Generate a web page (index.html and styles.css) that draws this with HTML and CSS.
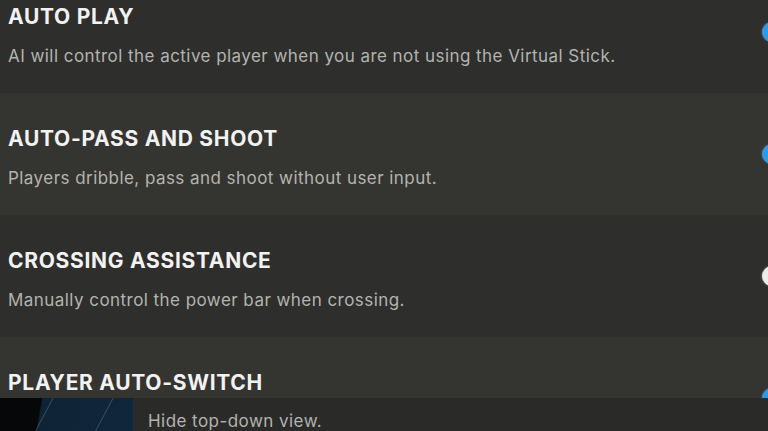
FILE: index.html
```html
<!DOCTYPE html>
<html lang="en">
<head>
    <meta charset="UTF-8">
    <meta name="viewport" content="width=device-width, initial-scale=1.0">
    <title>Assistance Settings</title>
    <link rel="stylesheet" href="styles.css">
</head>
<body>
<div class="settings">
    <div class="settings-list">

        <div class="setting-row row-dark">
            <div class="setting-text">
                <div class="setting-title">AUTO PLAY</div>
                <div class="setting-desc">AI will control the active player when you are not using the Virtual Stick.</div>
            </div>
            <div class="toggle toggle-on"></div>
        </div>

        <div class="setting-row row-light">
            <div class="setting-text">
                <div class="setting-title">AUTO-PASS AND SHOOT</div>
                <div class="setting-desc">Players dribble, pass and shoot without user input.</div>
            </div>
            <div class="toggle toggle-on"></div>
        </div>

        <div class="setting-row row-dark">
            <div class="setting-text">
                <div class="setting-title">CROSSING ASSISTANCE</div>
                <div class="setting-desc">Manually control the power bar when crossing.</div>
            </div>
            <div class="toggle toggle-off"></div>
        </div>

        <!-- last row is cut off by the preview bar, only the title shows -->
        <div class="setting-row row-light">
            <div class="setting-text">
                <div class="setting-title">PLAYER AUTO-SWITCH</div>
            </div>
            <div class="toggle toggle-on"></div>
        </div>

    </div>
</div>

<div class="preview-bar">
    <div class="preview-thumb">
        <span class="thumb-line line-one"></span>
        <span class="thumb-line line-two"></span>
    </div>
    <div class="preview-text">Hide top-down view.</div>
</div>
</body>
</html>
```

FILE: styles.css
```css
body, html {
    margin: 0;
    height: 100%;
    overflow: hidden;
    background-color: #2a2a28;
    font-family: Inter, "Open Sans", sans-serif;
}

.settings {
    height: 398px; /* list area above the preview bar */
    overflow: hidden;
}

.settings-list {
    margin-top: -29px; /* first row is scrolled partly out of view */
}

.setting-row {
    height: 122px;
    display: flex;
    align-items: flex-start;
    justify-content: space-between;
    padding: 33px 0 0 8px;
    box-sizing: border-box;
}

.row-dark {
    background-color: #2e2e2c;
}

.row-light {
    background-color: #343431;
}

.setting-text {
    display: flex;
    flex-direction: column;
    gap: 17px;
}

.setting-title {
    color: #f2f2f0;
    font-size: 21px;
    font-weight: 700;
    letter-spacing: 0.7px;
    line-height: 25px;
}

.setting-desc {
    color: #b4b4ae;
    font-size: 17px;
    line-height: 21px;
    letter-spacing: 0.45px;
}

.toggle {
    width: 20px;
    height: 20px;
    border-radius: 50%;
    margin-right: -14px;
    margin-top: 18px;
    flex-shrink: 0;
}

.toggle-on {
    background-color: #2f9be8;
    box-shadow: 0 0 3px rgba(47, 155, 232, 0.6);
}

.toggle-off {
    background-color: #ecece8;
    box-shadow: 0 0 3px rgba(255, 255, 255, 0.4);
}

.preview-bar {
    height: 33px;
    display: flex;
    overflow: hidden;
    background-color: #2a2a28;
}

.preview-thumb {
    position: relative;
    width: 133px;
    overflow: hidden;
    background: linear-gradient(100deg, #050708 0%, #050708 30%, #0f2336 31%, #10263b 100%);
}

.thumb-line {
    position: absolute;
    top: -10px;
    width: 1px;
    height: 60px;
    background-color: rgba(120, 150, 180, 0.35);
    transform: rotate(28deg);
}

.line-one {
    left: 42px;
}

.line-two {
    left: 102px;
}

.preview-text {
    color: #b4b4ae;
    font-size: 17px;
    letter-spacing: 0.45px;
    padding-left: 15px;
    padding-top: 13px;
    line-height: 21px;
}
```
